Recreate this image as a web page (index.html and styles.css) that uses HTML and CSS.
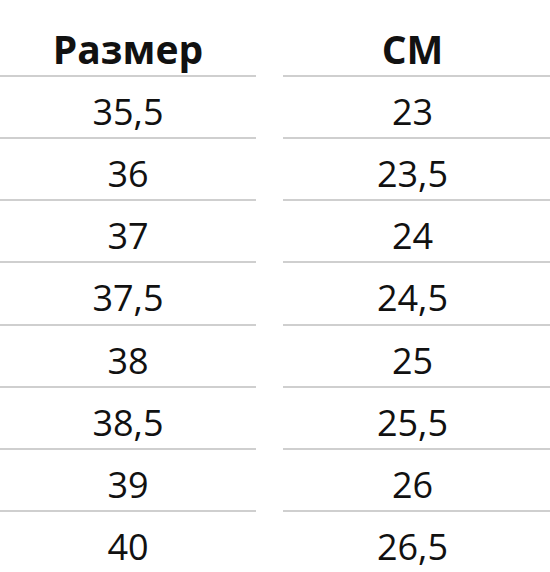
FILE: index.html
```html
<!DOCTYPE html>
<html lang="ru">
<head>
<meta charset="utf-8">
<title>Таблица размеров</title>
<link rel="stylesheet" href="styles.css">
</head>
<body>
<div class="table">
  <div class="cell head">Размер</div>
  <div class="cell head right">СМ</div>
  <div class="cell">35,5</div><div class="cell right">23</div>
  <div class="cell">36</div><div class="cell right">23,5</div>
  <div class="cell">37</div><div class="cell right">24</div>
  <div class="cell">37,5</div><div class="cell right">24,5</div>
  <div class="cell">38</div><div class="cell right">25</div>
  <div class="cell">38,5</div><div class="cell right">25,5</div>
  <div class="cell">39</div><div class="cell right">26</div>
  <div class="cell last">40</div><div class="cell right last">26,5</div>
</div>
</body>
</html>
```
FILE: styles.css
```css
html, body {
  margin: 0;
  padding: 0;
  background: #ffffff;
}
body {
  font-family: "Open Sans", "Liberation Sans", sans-serif;
  color: #111111;
}
.table {
  display: grid;
  grid-template-columns: 256px 1fr;
  column-gap: 27px;
  width: 550px;
}
.cell {
  box-sizing: content-box;
  font-size: 36px;
  line-height: 49px;
  padding-top: 10px;
  height: 50.14px;
  text-align: center;
  border-bottom: 2px solid #cfcfcf;
}
.cell.right {
  padding-right: 8px;
}
.cell.head {
  font-weight: 700;
  font-size: 39px;
  line-height: 53px;
  padding-top: 22px;
  height: 53px;
}
.cell.last {
  border-bottom: none;
}
```
